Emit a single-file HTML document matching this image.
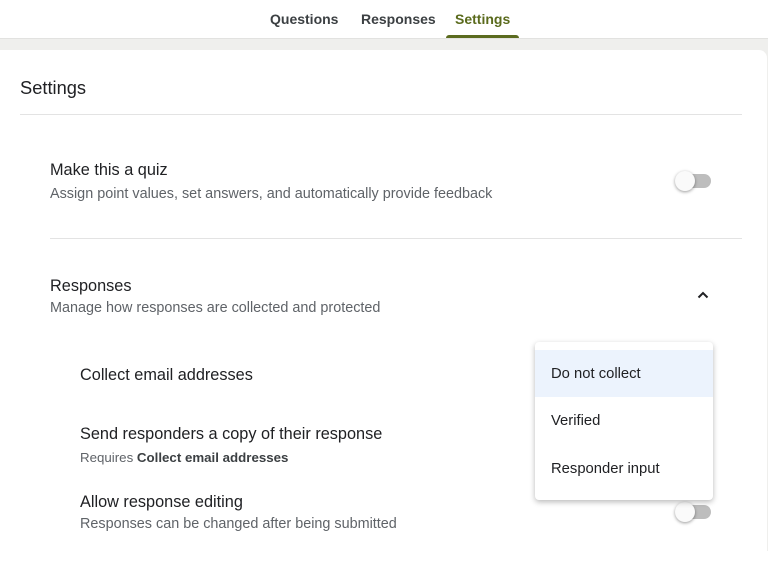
<!DOCTYPE html>
<html><head><style>
*{margin:0;padding:0;box-sizing:border-box}
body{width:768px;height:551px;overflow:hidden;background:#fff;font-family:"Liberation Sans",Arial,sans-serif;position:relative;color:#202124}
.a{position:absolute;white-space:nowrap}
.tab{font-size:14px;font-weight:bold;color:#3c4043;top:11px}
.t16{font-size:16.3px;color:#202124}
.sub{font-size:14.4px;color:#5f6368}
.tog{position:absolute;width:38px;height:22px}
.tog .tr{position:absolute;left:10px;top:4px;width:26px;height:14px;border-radius:7px;background:#bdbdbd}
.tog .th{position:absolute;left:0;top:1px;width:20px;height:20px;border-radius:50%;background:#fafafa;box-shadow:0 1px 3px rgba(0,0,0,.4)}
.it{position:absolute;left:16px;font-size:14.8px;color:#202124}
</style></head><body>
<div class="a tab" style="left:270px">Questions</div>
<div class="a tab" style="left:361px">Responses</div>
<div class="a tab" style="left:455px;color:#5a6a1c">Settings</div>
<div class="a" style="left:446px;top:35px;width:73px;height:3px;background:#5b6b1f;border-radius:3px 3px 0 0"></div>
<div class="a" style="left:0;top:38px;width:768px;height:513px;background:#efefed;border-top:1px solid #e2e2e0"></div>
<div class="a" style="left:-8px;top:50px;width:775px;height:520px;background:#fff;border-radius:8px"></div>
<div class="a" style="left:20px;top:77px;font-size:18.3px;color:#202124">Settings</div>
<div class="a" style="left:20px;top:114px;width:722px;height:1px;background:#e3e3e3"></div>
<div class="a t16" style="left:50px;top:161px">Make this a quiz</div>
<div class="a sub" style="left:50px;top:186px">Assign point values, set answers, and automatically provide feedback</div>
<div class="tog" style="left:675px;top:170px"><div class="tr"></div><div class="th"></div></div>
<div class="a" style="left:50px;top:238px;width:692px;height:1px;background:#e3e3e3"></div>
<div class="a t16" style="left:50px;top:277px">Responses</div>
<div class="a sub" style="left:50px;top:300px">Manage how responses are collected and protected</div>
<svg class="a" style="left:697px;top:291px" width="12" height="8" viewBox="0 0 12 8"><path d="M1.5 6.5L6 2L10.5 6.5" fill="none" stroke="#202124" stroke-width="2"/></svg>
<div class="a t16" style="left:80px;top:366px">Collect email addresses</div>
<div class="a t16" style="left:80px;top:425px">Send responders a copy of their response</div>
<div class="a" style="left:80px;top:450px;font-size:13.3px;color:#5f6368">Requires <b style="color:#3c4043">Collect email addresses</b></div>
<div class="a t16" style="left:80px;top:493px">Allow response editing</div>
<div class="a sub" style="left:80px;top:516px">Responses can be changed after being submitted</div>
<div class="tog" style="left:675px;top:501px"><div class="tr"></div><div class="th"></div></div>
<div class="a" style="left:535px;top:342px;width:178px;height:158px;background:#fff;border-radius:4px;box-shadow:0 2px 6px rgba(0,0,0,.28)">
<div style="position:absolute;left:0;top:8px;width:178px;height:47px;background:#ecf3fd"></div>
<div class="it" style="top:24px">Do not collect</div>
<div class="it" style="top:71px">Verified</div>
<div class="it" style="top:119px">Responder input</div>
</div>
</body></html>
